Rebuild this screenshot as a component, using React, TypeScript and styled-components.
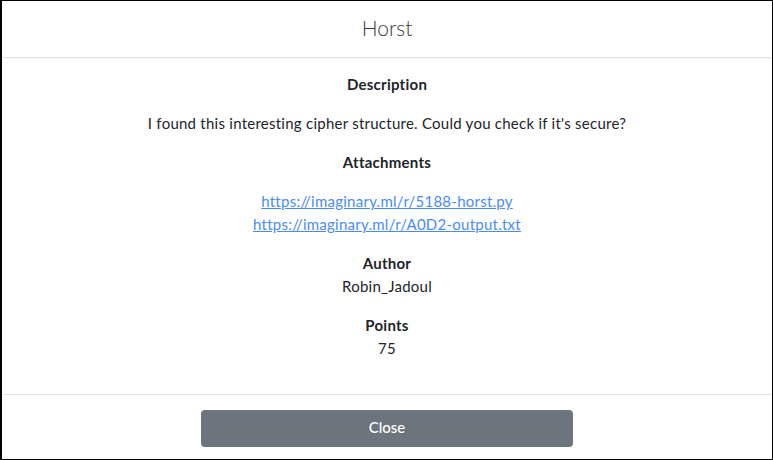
import styled, { createGlobalStyle } from "styled-components"

const GlobalStyle = createGlobalStyle`
   html, body {
      margin: 0;
      padding: 0;
      background: #fff;
   }
   body {
      font-family: Lato, "Open Sans", sans-serif;
      color: #212529;
   }
`

const Modal = styled.div`
   box-sizing: border-box;
   width: 773px;
   height: 460px;
   display: flex;
   flex-direction: column;
   border: 1px solid #000;
   border-left-width: 2px;
   background: #fff;
`

const Header = styled.header`
   height: 57px;
   box-sizing: border-box;
   padding-bottom: 4px;
   display: flex;
   align-items: center;
   justify-content: center;
   border-bottom: 1px solid #e3e3e3;
   box-shadow: 0 1px 2px rgba(0, 0, 0, 0.04);
`

const Title = styled.h5`
   margin: 0;
   font-size: 21px;
   font-weight: 300;
   color: #3a3a3a;
`

const Body = styled.main`
   flex: 1;
   display: flex;
   flex-direction: column;
   align-items: center;
   gap: 16px;
   padding: 15px 16px 0;
   text-align: center;
   font-size: 15px;
   line-height: 23px;
   letter-spacing: 0.25px;
`

const Section = styled.section<{ $spaced?: boolean }>`
   display: flex;
   flex-direction: column;
   align-items: center;
   gap: ${({ $spaced }) => ($spaced ? "16px" : "0")};
`

const Heading = styled.h6`
   margin: 0;
   font-size: 15px;
   line-height: 23px;
   font-weight: 700;
   color: #212529;
`

const Text = styled.p`
   margin: 0;
`

const Links = styled.div`
   display: flex;
   flex-direction: column;
   align-items: center;
`

const Link = styled.a`
   color: #4a8cf7;
   text-decoration: underline;
`

const Footer = styled.footer`
   height: 65px;
   display: flex;
   justify-content: center;
   padding-top: 15px;
   box-sizing: border-box;
   border-top: 1px solid #e3e6ea;
`

const CloseButton = styled.button`
   width: 372px;
   height: 37px;
   padding: 0 0 3px;
   border: none;
   border-radius: 4px;
   background: #6c757d;
   color: #fff;
   font-family: inherit;
   font-size: 15px;
   font-weight: 500;
   cursor: pointer;
`

export default function App() {
   return (
      <>
         <GlobalStyle />
         <Modal>
            <Header>
               <Title>Horst</Title>
            </Header>

            <Body>
               <Section $spaced>
                  <Heading>Description</Heading>
                  <Text>I found this interesting cipher structure. Could you check if it's secure?</Text>
               </Section>

               <Section $spaced>
                  <Heading>Attachments</Heading>
                  <Links>
                     <Link href="#">https://imaginary.ml/r/5188-horst.py</Link>
                     <Link href="#">https://imaginary.ml/r/A0D2-output.txt</Link>
                  </Links>
               </Section>

               <Section>
                  <Heading>Author</Heading>
                  <Text>Robin_Jadoul</Text>
               </Section>

               <Section>
                  <Heading>Points</Heading>
                  <Text>75</Text>
               </Section>
            </Body>

            <Footer>
               <CloseButton>Close</CloseButton>
            </Footer>
         </Modal>
      </>
   )
}
